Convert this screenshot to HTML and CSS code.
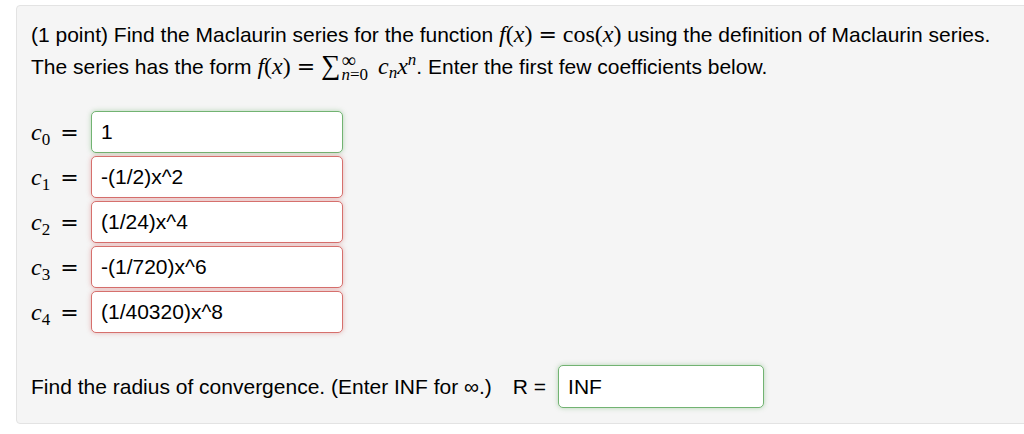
FILE: index.html
```html
<!DOCTYPE html>
<html lang="en">

<head>
    <meta charset="UTF-8">
    <meta name="viewport" content="width=device-width, initial-scale=1.0">
    <title>Maclaurin Series Problem</title>
    <link rel="stylesheet" href="styles.css">
</head>

<body>
    <div class="problem">
        <!-- Problem statement -->
        <p class="intro">
            (1 point) Find the Maclaurin series for the function
            <span class="math"><i>f</i>(<i>x</i>) <span class="eq">=</span> cos(<i>x</i>)</span>
            using the definition of Maclaurin series.<br>
            The series has the form
            <span class="math"><i>f</i>(<i>x</i>) <span class="eq">=</span> <span class="sum">&sum;</span><span class="limits"><span class="upper">&infin;</span><span class="lower"><i>n</i>=0</span></span> <i>c</i><span class="idx"><i>n</i></span><i>x</i><span class="pow"><i>n</i></span></span>.
            Enter the first few coefficients below.
        </p>

        <!-- Coefficients -->
        <div class="answers">
            <div class="answer-row">
                <label class="coef"><i>c</i><sub>0</sub> <span class="eq">=</span></label>
                <input class="answer correct" type="text" value="1">
            </div>
            <div class="answer-row">
                <label class="coef"><i>c</i><sub>1</sub> <span class="eq">=</span></label>
                <input class="answer wrong" type="text" value="-(1/2)x^2">
            </div>
            <div class="answer-row">
                <label class="coef"><i>c</i><sub>2</sub> <span class="eq">=</span></label>
                <input class="answer wrong" type="text" value="(1/24)x^4">
            </div>
            <div class="answer-row">
                <label class="coef"><i>c</i><sub>3</sub> <span class="eq">=</span></label>
                <input class="answer wrong" type="text" value="-(1/720)x^6">
            </div>
            <div class="answer-row">
                <label class="coef"><i>c</i><sub>4</sub> <span class="eq">=</span></label>
                <input class="answer wrong" type="text" value="(1/40320)x^8">
            </div>
        </div>

        <!-- Radius of convergence -->
        <div class="radius">
            <span>Find the radius of convergence. (Enter INF for &infin;.)</span>
            <span class="r-label">R =</span>
            <input class="answer correct small" type="text" value="INF">
        </div>
    </div>
</body>

</html>
```

FILE: styles.css
```css
body {
    font-family: "Liberation Sans", Arial, sans-serif;
    font-size: 21px;
    color: #000;
    margin: 0;
    background-color: #fff;
}

.problem {
    margin: 5px 0 0 16px;
    width: 1040px;
    height: 419px;
    box-sizing: border-box;
    padding: 13px 14px 0 14px;
    background-color: #f5f5f5;
    border: 1px solid #e3e3e3;
    border-radius: 4px;
}

.intro {
    margin: 0;
    line-height: 32px;
}

.math {
    font-family: "Liberation Serif", "Times New Roman", serif;
    font-size: 24px;
    line-height: 0;
    white-space: nowrap;
}

.eq {
    font-family: "DejaVu Serif", serif;
    font-size: 22px;
}

.sum {
    font-size: 27px;
}

.limits {
    display: inline-block;
    vertical-align: -6px;
    margin: 0 4px 0 1px;
}

.upper,
.lower {
    display: block;
}

.upper {
    font-size: 20px;
    line-height: 15px;
}

.lower {
    font-size: 17px;
    line-height: 14px;
}

.idx,
.pow {
    font-size: 17px;
    line-height: 0;
    position: relative;
}

.idx {
    top: 4px;
}

.pow {
    top: -9px;
}

.answers {
    margin-top: 28px;
    display: flex;
    flex-direction: column;
    gap: 3px;
}

.answer-row {
    display: flex;
    align-items: center;
}

.coef {
    width: 60px;
    font-family: "Liberation Serif", "Times New Roman", serif;
    font-size: 24px;
    white-space: nowrap;
}

.coef sub {
    font-size: 17px;
    margin-right: 4px;
    line-height: 0;
}

.answer {
    width: 252px;
    height: 42px;
    box-sizing: border-box;
    padding: 0 9px;
    font-family: "Liberation Sans", Arial, sans-serif;
    font-size: 21px;
    color: #000;
    background-color: #fff;
    border: 1px solid #ccc;
    border-radius: 5px;
    outline: none;
}

.correct {
    border-color: #72b372;
    box-shadow: 0 0 5px rgba(60, 150, 60, 0.35);
}

.wrong {
    border-color: #d6706d;
    box-shadow: 0 0 5px rgba(200, 60, 60, 0.35);
}

.radius {
    margin-top: 32px;
    display: flex;
    align-items: center;
}

.r-label {
    margin: 0 12px 0 21px;
}

.small {
    width: 206px;
    height: 43px;
}
```
